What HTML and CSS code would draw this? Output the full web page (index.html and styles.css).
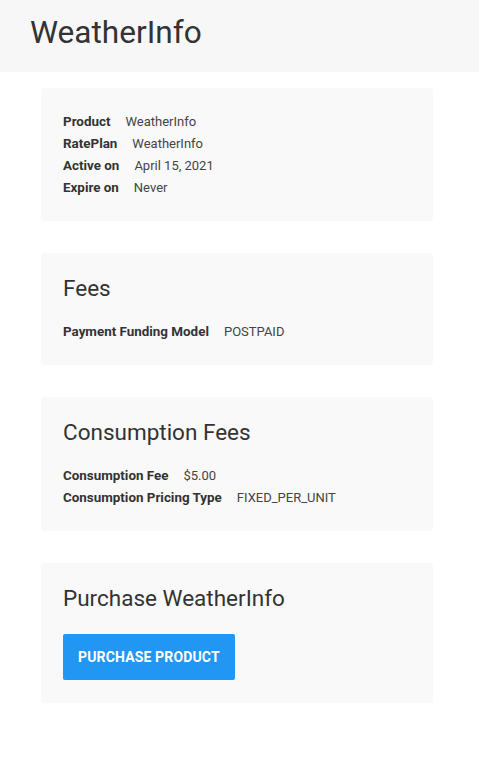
FILE: index.html
```html
<!DOCTYPE html>
<html>

<head>
    <title>WeatherInfo</title>
    <link rel="stylesheet" href="styles.css">
</head>

<body>
    <header class="header">
        <h1>WeatherInfo</h1>
    </header>

    <div class="content">
        <div class="card">
            <div class="row"><span class="label">Product</span><span class="value">WeatherInfo</span></div>
            <div class="row"><span class="label">RatePlan</span><span class="value">WeatherInfo</span></div>
            <div class="row"><span class="label">Active on</span><span class="value">April 15, 2021</span></div>
            <div class="row"><span class="label">Expire on</span><span class="value">Never</span></div>
        </div>

        <div class="card">
            <h2>Fees</h2>
            <div class="row"><span class="label">Payment Funding Model</span><span class="value">POSTPAID</span></div>
        </div>

        <div class="card">
            <h2>Consumption Fees</h2>
            <div class="row"><span class="label">Consumption Fee</span><span class="value">$5.00</span></div>
            <div class="row"><span class="label">Consumption Pricing Type</span><span class="value">FIXED_PER_UNIT</span></div>
        </div>

        <div class="card">
            <h2>Purchase WeatherInfo</h2>
            <button type="button" class="btn">Purchase Product</button>
        </div>
    </div>
</body>

</html>
```

FILE: styles.css
```css
body {
    font-family: Roboto, "Liberation Sans", sans-serif;
    background-color: #fff;
    color: #333;
    margin: 0;
    padding: 0;
}

.header {
    background-color: #f7f7f7;
    height: 72px;
    padding: 0 30px;
}

.header h1 {
    margin: 0;
    padding-top: 14px;
    font-size: 31.6px;
    font-weight: 400;
    line-height: 38px;
    color: #333;
}

.content {
    width: 392px;
    margin-left: 41px;
    padding-top: 16px;
    display: flex;
    flex-direction: column;
    gap: 32px;
}

.card {
    background-color: #f9f9f9;
    border-radius: 3px;
    padding: 22.5px 22px;
}

.card h2 {
    margin: 0 0 20px;
    font-size: 22.5px;
    font-weight: 400;
    line-height: 25px;
    color: #333;
}

.row {
    font-size: 13px;
    line-height: 22px;
    color: #444;
}

.label {
    font-size: 13.4px;
    font-weight: 700;
    color: #333;
    margin-right: 15px;
}

.btn {
    display: block;
    margin-top: 23.5px;
    background-color: #2196f3;
    color: white;
    border: none;
    border-radius: 2px;
    height: 46px;
    padding: 0 15px;
    font-family: Roboto, "Liberation Sans", sans-serif;
    font-size: 14px;
    font-weight: 700;
    letter-spacing: 0.15px;
    text-transform: uppercase;
    cursor: pointer;
}
```
